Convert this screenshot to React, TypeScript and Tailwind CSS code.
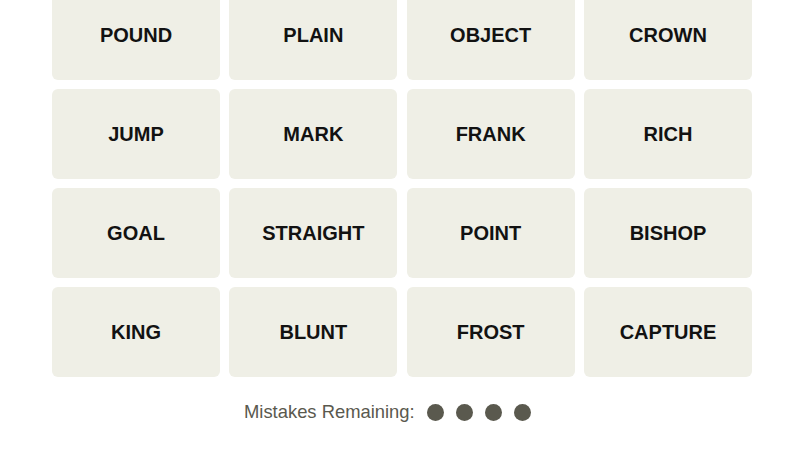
import React from 'react';

const words: string[] = [
  'POUND', 'PLAIN', 'OBJECT', 'CROWN',
  'JUMP', 'MARK', 'FRANK', 'RICH',
  'GOAL', 'STRAIGHT', 'POINT', 'BISHOP',
  'KING', 'BLUNT', 'FROST', 'CAPTURE',
];

const App: React.FC = () => {
  return (
    <div className="w-[800px] h-[450px] overflow-hidden bg-white" style={{ fontFamily: '"Liberation Sans", Arial, sans-serif' }}>
      <div className="mt-[-10px] ml-[52px] w-[700px] grid grid-cols-4 gap-x-[9.33px] gap-y-[9px]">
        {words.map((w) => (
          <div
            key={w}
            className="h-[90px] pb-[1px] rounded-md bg-[#efefe6] flex items-center justify-center text-[20px] font-bold text-[#121212] uppercase"
          >
            {w}
          </div>
        ))}
      </div>

      <div className="mt-[24px] pl-[244px] flex items-center h-[22px]">
        <span className="text-[18.4px] text-[#5a594e]">Mistakes Remaining:</span>
        <div className="ml-[12px] flex gap-[12px]">
          <span className="w-[17px] h-[17px] rounded-full bg-[#5a594e]" />
          <span className="w-[17px] h-[17px] rounded-full bg-[#5a594e]" />
          <span className="w-[17px] h-[17px] rounded-full bg-[#5a594e]" />
          <span className="w-[17px] h-[17px] rounded-full bg-[#5a594e]" />
        </div>
      </div>
    </div>
  );
};

export default App;
